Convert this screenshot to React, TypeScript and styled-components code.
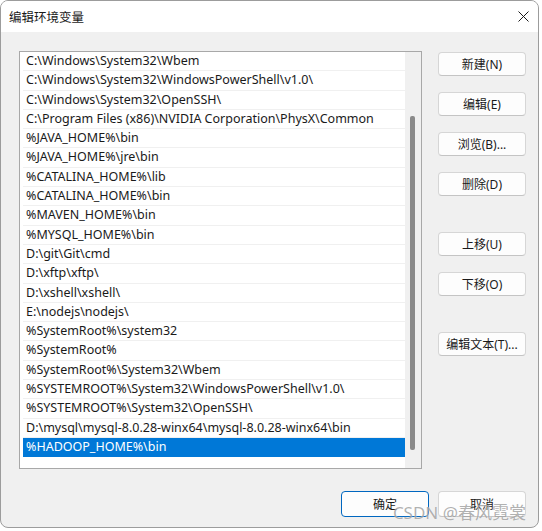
import React from 'react';
import styled, { createGlobalStyle } from 'styled-components';

const GlobalStyle = createGlobalStyle`
    html, body {
        margin: 0;
        padding: 0;
        background: #ffffff;
    }
    * {
        box-sizing: border-box;
    }
`;

const FONT = `"Microsoft YaHei UI", "Noto Sans", "Noto Sans CJK SC", sans-serif`;

const Window = styled.div`
    position: relative;
    width: 539px;
    height: 528px;
    border: 1px solid #9c9c9c;
    border-radius: 8px;
    overflow: hidden;
    background: #f0f0f0;
    display: flex;
    flex-direction: column;
    font-family: ${FONT};
    color: #1a1a1a;
`;

const TitleBar = styled.div`
    height: 31px;
    flex: 0 0 31px;
    background: #ffffff;
    display: flex;
    align-items: center;
    justify-content: space-between;
    padding: 0 3px 0 8px;
    font-size: 12.5px;
`;

const CloseButton = styled.div`
    width: 24px;
    height: 24px;
    display: flex;
    align-items: center;
    justify-content: center;
`;

const Body = styled.div`
    display: flex;
    padding: 19px 12px 0 18px;
    gap: 16px;
`;

const ListBox = styled.div`
    width: 404px;
    height: 418px;
    border: 1px solid #a8a8a8;
    background: #ffffff;
    display: flex;
`;

const Rows = styled.div`
    flex: 1;
    padding-left: 3px;
`;

const Row = styled.div<{ $selected?: boolean }>`
    height: 19.3px;
    line-height: 18.3px;
    font-size: 12.5px;
    padding-left: 3px;
    white-space: nowrap;
    overflow: hidden;
    border-bottom: 1px solid ${(p) => (p.$selected ? '#0078d7' : '#f0f0f0')};
    background: ${(p) => (p.$selected ? '#0078d7' : '#ffffff')};
    color: ${(p) => (p.$selected ? '#ffffff' : '#1a1a1a')};
`;

const ScrollTrack = styled.div`
    width: 16px;
    flex: 0 0 16px;
    background: #f0f0f0;
    padding: 64px 0 0 5px;
`;

const ScrollThumb = styled.div`
    width: 5px;
    height: 334px;
    background: #8a8a8a;
    border-radius: 2px;
`;

const ButtonColumn = styled.div`
    display: flex;
    flex-direction: column;
    padding-top: 1px;
`;

const Button = styled.button<{ $gap?: number; $primary?: boolean }>`
    width: 88px;
    height: 24px;
    margin-top: ${(p) => p.$gap ?? 0}px;
    font-family: ${FONT};
    font-size: 12px;
    color: #1a1a1a;
    background: #fdfdfd;
    border: 1px solid ${(p) => (p.$primary ? '#0067c0' : '#d6d6d6')};
    border-bottom-color: ${(p) => (p.$primary ? '#0067c0' : '#c4c4c4')};
    border-radius: 4px;
    padding: 0;
    display: flex;
    align-items: center;
    justify-content: center;
`;

const Footer = styled.div`
    display: flex;
    justify-content: flex-end;
    gap: 9px;
    padding: 22px 12px 0 0;
`;

const FooterButton = styled(Button)`
    height: 26px;
`;

const Watermark = styled.div`
    position: absolute;
    right: 12px;
    bottom: 3px;
    font-family: "Noto Sans", "Noto Sans CJK SC", sans-serif;
    font-size: 17px;
    color: rgba(110, 110, 110, 0.55);
    text-shadow: 0 0 1px rgba(255, 255, 255, 0.8);
    pointer-events: none;
`;

const paths = [
    'C:\\Windows\\System32\\Wbem',
    'C:\\Windows\\System32\\WindowsPowerShell\\v1.0\\',
    'C:\\Windows\\System32\\OpenSSH\\',
    'C:\\Program Files (x86)\\NVIDIA Corporation\\PhysX\\Common',
    '%JAVA_HOME%\\bin',
    '%JAVA_HOME%\\jre\\bin',
    '%CATALINA_HOME%\\lib',
    '%CATALINA_HOME%\\bin',
    '%MAVEN_HOME%\\bin',
    '%MYSQL_HOME%\\bin',
    'D:\\git\\Git\\cmd',
    'D:\\xftp\\xftp\\',
    'D:\\xshell\\xshell\\',
    'E:\\nodejs\\nodejs\\',
    '%SystemRoot%\\system32',
    '%SystemRoot%',
    '%SystemRoot%\\System32\\Wbem',
    '%SYSTEMROOT%\\System32\\WindowsPowerShell\\v1.0\\',
    '%SYSTEMROOT%\\System32\\OpenSSH\\',
    'D:\\mysql\\mysql-8.0.28-winx64\\mysql-8.0.28-winx64\\bin',
    '%HADOOP_HOME%\\bin',
];

const buttons = [
    { label: '新建(N)', gap: 0 },
    { label: '编辑(E)', gap: 16 },
    { label: '浏览(B)...', gap: 16 },
    { label: '删除(D)', gap: 16 },
    { label: '上移(U)', gap: 36 },
    { label: '下移(O)', gap: 16 },
    { label: '编辑文本(T)...', gap: 36 },
];

function App() {
    const [selected, setSelected] = React.useState(paths.length - 1);

    return (
        <>
            <GlobalStyle />
            <Window>
                <TitleBar>
                    <span>编辑环境变量</span>
                    <CloseButton>
                        <svg width="11" height="11" viewBox="0 0 11 11">
                            <path d="M0.5 0.5L10.5 10.5M10.5 0.5L0.5 10.5" stroke="#1a1a1a" strokeWidth="1" />
                        </svg>
                    </CloseButton>
                </TitleBar>
                <Body>
                    <ListBox>
                        <Rows>
                            {paths.map((p, i) => (
                                <Row key={i} $selected={i === selected} onClick={() => setSelected(i)}>
                                    {p}
                                </Row>
                            ))}
                        </Rows>
                        <ScrollTrack>
                            <ScrollThumb />
                        </ScrollTrack>
                    </ListBox>
                    <ButtonColumn>
                        {buttons.map((b) => (
                            <Button key={b.label} $gap={b.gap}>
                                {b.label}
                            </Button>
                        ))}
                    </ButtonColumn>
                </Body>
                <Footer>
                    <FooterButton $primary>确定</FooterButton>
                    <FooterButton>取消</FooterButton>
                </Footer>
                <Watermark>CSDN @春风霓裳</Watermark>
            </Window>
        </>
    );
}

export default App;
